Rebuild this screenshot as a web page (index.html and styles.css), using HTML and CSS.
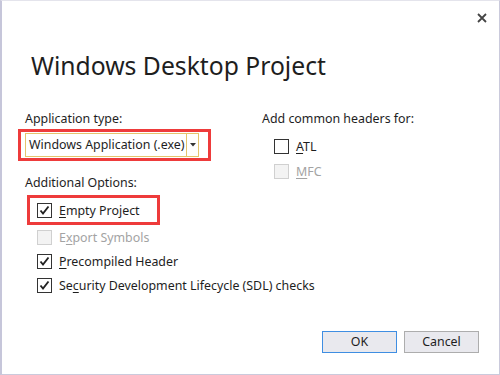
FILE: index.html
```html
<!DOCTYPE html>
<html>
<head>
<meta charset="utf-8">
<link rel="stylesheet" href="styles.css">
</head>
<body>
<div class="dialog">
  <div class="titlebar">
    <svg class="close" width="10" height="10" viewBox="0 0 10 10"><path d="M1 1L9 9M9 1L1 9" stroke="#444" stroke-width="1.8" fill="none"/></svg>
  </div>
  <h1 class="title">Windows Desktop Project</h1>
  <div class="content">
    <div class="col left">
      <div class="label">Application type:</div>
      <div class="redbox combo-wrap">
        <div class="combo">
          <span class="combo-text">Windows Application (.exe)</span>
          <span class="combo-btn"><svg width="6" height="4" viewBox="0 0 6 4"><path d="M0 0H6L3 3.5Z" fill="#333"/></svg></span>
        </div>
      </div>
      <div class="label gap">Additional Options:</div>
      <div class="redbox check-wrap">
        <div class="row">
          <span class="cb"><svg width="13" height="13" viewBox="0 0 13 13"><path d="M2.5 6.5L5 9.5L10.5 2.5" stroke="#222" stroke-width="1.9" fill="none"/></svg></span>
          <span><u>E</u>mpty Project</span>
        </div>
      </div>
      <div class="row ind disabled">
        <span class="cb"></span>
        <span>E<u>x</u>port Symbols</span>
      </div>
      <div class="row ind">
        <span class="cb"><svg width="13" height="13" viewBox="0 0 13 13"><path d="M2.5 6.5L5 9.5L10.5 2.5" stroke="#222" stroke-width="1.9" fill="none"/></svg></span>
        <span><u>P</u>recompiled Header</span>
      </div>
      <div class="row ind">
        <span class="cb"><svg width="13" height="13" viewBox="0 0 13 13"><path d="M2.5 6.5L5 9.5L10.5 2.5" stroke="#222" stroke-width="1.9" fill="none"/></svg></span>
        <span>Se<u>c</u>urity Development Lifecycle (SDL) checks</span>
      </div>
    </div>
    <div class="col right">
      <div class="label">Add common headers for:</div>
      <div class="rgroup">
        <div class="row ind rrow">
          <span class="cb"></span>
          <span><u>A</u>TL</span>
        </div>
        <div class="row ind rrow disabled">
          <span class="cb"></span>
          <span><u>M</u>FC</span>
        </div>
      </div>
    </div>
  </div>
  <div class="footer">
    <button class="btn ok">OK</button>
    <button class="btn">Cancel</button>
  </div>
</div>
</body>
</html>
```
FILE: styles.css
```css
html, body {
  margin: 0;
  padding: 0;
  background: #fff;
}
.dialog {
  width: 500px;
  height: 375px;
  box-sizing: border-box;
  border: 1px solid #cacadc;
  border-left: 2px solid #c6c6da;
  border-top-color: #e4e4ec;
  display: flex;
  flex-direction: column;
  font-family: "Noto Sans", "Open Sans", sans-serif;
  font-size: 12.4px;
  color: #1e1e1e;
}
.titlebar {
  height: 34px;
  display: flex;
  justify-content: flex-end;
  align-items: center;
  padding-right: 12px;
}
.close { display: block; }
.title {
  margin: 15px 0 0 29px;
  font-weight: normal;
  font-size: 24.7px;
  line-height: 32px;
  color: #1e1e1e;
}
.content {
  display: grid;
  grid-template-columns: 237px 1fr;
  padding-left: 23px;
  margin-top: 27px;
}
.label {
  line-height: 20px;
  height: 20px;
}
.label.gap { margin-top: 12px; }
.redbox {
  border: 3px solid #ee3b3b;
  box-sizing: border-box;
}
.combo-wrap {
  width: 193px;
  margin-left: -7px;
  padding: 1px 9px 1px 4px;
}
.combo {
  height: 24px;
  box-sizing: border-box;
  border: 1px solid #e5c46c;
  display: flex;
  background: #fff;
}
.combo-text {
  flex: 1;
  overflow: hidden;
  white-space: nowrap;
  line-height: 22px;
  padding-left: 3px;
}
.combo-btn {
  width: 11px;
  border-left: 1px solid #e5c46c;
  display: flex;
  align-items: center;
  justify-content: center;
}
.check-wrap {
  width: 133px;
  height: 30px;
  margin-left: 2px;
  margin-top: 2px;
  padding-left: 7px;
}
.check-wrap .row { height: 24px; }
.row {
  height: 24px;
  display: flex;
  align-items: center;
  gap: 7px;
  white-space: nowrap;
}
.row.ind { padding-left: 12px; }
.rrow { height: 25px; }
.rgroup { margin-top: 5px; }
.cb {
  width: 15px;
  height: 15px;
  box-sizing: border-box;
  border: 1px solid #333;
  background: #fff;
  display: flex;
  align-items: center;
  justify-content: center;
  flex: none;
}
.cb svg { display: block; }
.disabled { color: #a3a3a3; }
.disabled .cb {
  border-color: #d0d0d0;
  background: #f3f3f3;
}
u { text-underline-offset: 2px; }
.footer {
  margin-top: auto;
  display: flex;
  justify-content: flex-end;
  gap: 7px;
  padding: 0 20px 21px 0;
}
.btn {
  width: 75px;
  height: 22px;
  box-sizing: border-box;
  border: 1px solid #adadad;
  background: #e9e9ee;
  font-family: "Noto Sans", "Open Sans", sans-serif;
  font-size: 12.4px;
  color: #1e1e1e;
  padding: 0;
  line-height: 20px;
}
.btn.ok { border-color: #3f8ee2; }
```
